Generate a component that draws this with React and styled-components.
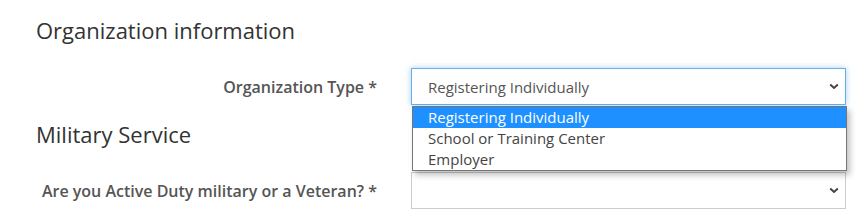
import styled, { createGlobalStyle } from "styled-components";

const Global = createGlobalStyle`
    body {
        margin: 0;
        background: #fff;
        font-family: "Open Sans", Lato, sans-serif;
    }
`

const Page = styled.div`
    padding: 14px 18px 0 36px;
    width: 864px;
    box-sizing: border-box;
`
const Heading = styled.h3`
    margin: 0;
    font-size: 22px;
    font-weight: 400;
    color: #333;
    line-height: 32px;
`
const Row = styled.div`
    display: grid;
    grid-template-columns: 341px 435px;
    column-gap: 34px;
    align-items: center;
    margin: ${p => p.$mt}px 0 ${p => p.$mb}px;
`
const Label = styled.label`
    text-align: right;
    white-space: nowrap;
    font-size: 16px;
    font-weight: 600;
    color: #555;
`
const Field = styled.div`
    position: relative;
`
const Control = styled.div`
    height: 37px;
    box-sizing: border-box;
    border: 1px solid ${p => p.$focus ? "#66afe9" : "#ccc"};
    box-shadow: ${p => p.$focus ? "0 0 6px rgba(102,175,233,.6)" : "none"};
    display: flex;
    align-items: center;
    justify-content: space-between;
    padding: 0 6px 0 16px;
    font-size: 15px;
    color: #555;
`
const Chevron = () => (
    <svg width="10" height="7" viewBox="0 0 10 7">
        <path d="M1.2 1.5 L5 5 L8.8 1.5" fill="none" stroke="#444" strokeWidth="2" />
    </svg>
)
const Menu = styled.ul`
    position: absolute;
    top: 38px;
    left: 1px;
    width: 435px;
    box-sizing: border-box;
    margin: 0;
    padding: 0;
    list-style: none;
    background: #fff;
    border: 1px solid #767676;
    box-shadow: 3px 4px 6px rgba(0,0,0,.25);
    z-index: 5;
`
const Option = styled.li`
    height: 21px;
    line-height: 21px;
    padding-left: 15px;
    font-size: 15px;
    color: ${p => p.$active ? "#fff" : "#444"};
    background: ${p => p.$active ? "#1e90ff" : "transparent"};
`

const App = () => (
    <>
        <Global />
        <Page>
            <Heading>Organization information</Heading>
            <Row $mt={22} $mb={13}>
                <Label>Organization Type *</Label>
                <Field>
                    <Control $focus>
                        <span>Registering Individually</span>
                        <Chevron />
                    </Control>
                    <Menu>
                        <Option $active>Registering Individually</Option>
                        <Option>School or Training Center</Option>
                        <Option>Employer</Option>
                    </Menu>
                </Field>
            </Row>
            <Heading>Military Service</Heading>
            <Row $mt={22} $mb={0}>
                <Label>Are you Active Duty military or a Veteran? *</Label>
                <Field>
                    <Control>
                        <span></span>
                        <Chevron />
                    </Control>
                </Field>
            </Row>
        </Page>
    </>
)

export default App;
